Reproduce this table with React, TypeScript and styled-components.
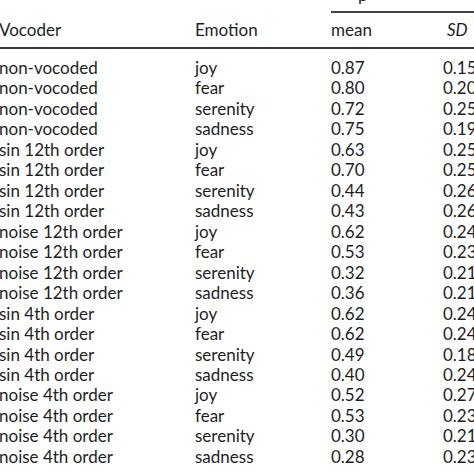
import styled, { createGlobalStyle } from "styled-components";

interface IRow {
  vocoder: string;
  emotion: string;
  mean: string;
  sd: string;
}

const rows: IRow[] = [
  { vocoder: "non-vocoded", emotion: "joy", mean: "0.87", sd: "0.15" },
  { vocoder: "non-vocoded", emotion: "fear", mean: "0.80", sd: "0.20" },
  { vocoder: "non-vocoded", emotion: "serenity", mean: "0.72", sd: "0.25" },
  { vocoder: "non-vocoded", emotion: "sadness", mean: "0.75", sd: "0.19" },
  { vocoder: "sin 12th order", emotion: "joy", mean: "0.63", sd: "0.25" },
  { vocoder: "sin 12th order", emotion: "fear", mean: "0.70", sd: "0.25" },
  { vocoder: "sin 12th order", emotion: "serenity", mean: "0.44", sd: "0.26" },
  { vocoder: "sin 12th order", emotion: "sadness", mean: "0.43", sd: "0.26" },
  { vocoder: "noise 12th order", emotion: "joy", mean: "0.62", sd: "0.24" },
  { vocoder: "noise 12th order", emotion: "fear", mean: "0.53", sd: "0.23" },
  { vocoder: "noise 12th order", emotion: "serenity", mean: "0.32", sd: "0.21" },
  { vocoder: "noise 12th order", emotion: "sadness", mean: "0.36", sd: "0.21" },
  { vocoder: "sin 4th order", emotion: "joy", mean: "0.62", sd: "0.24" },
  { vocoder: "sin 4th order", emotion: "fear", mean: "0.62", sd: "0.24" },
  { vocoder: "sin 4th order", emotion: "serenity", mean: "0.49", sd: "0.18" },
  { vocoder: "sin 4th order", emotion: "sadness", mean: "0.40", sd: "0.24" },
  { vocoder: "noise 4th order", emotion: "joy", mean: "0.52", sd: "0.27" },
  { vocoder: "noise 4th order", emotion: "fear", mean: "0.53", sd: "0.23" },
  { vocoder: "noise 4th order", emotion: "serenity", mean: "0.30", sd: "0.21" },
  { vocoder: "noise 4th order", emotion: "sadness", mean: "0.28", sd: "0.23" },
];

const GlobalStyle = createGlobalStyle`
  html, body {
    margin: 0;
    padding: 0;
    background: #fff;
  }
`;

const Page = styled.div`
  width: 474px;
  height: 474px;
  overflow: hidden;
  background: #fff;
  color: #1e1e1e;
  font-family: Lato, "Open Sans", sans-serif;
  font-size: 17px;
`;

const SpanHeader = styled.div`
  display: flex;
  align-items: flex-end;
  margin-left: 331px;
  height: 11px;
`;

const SpanLabel = styled.div`
  padding-left: 27px;
  margin-bottom: 8px;
  line-height: 17px;
  white-space: nowrap;
`;

const SpanRule = styled.div`
  width: 143px;
  height: 2px;
  margin-left: 331px;
  background: #444;
`;

const HeadRule = styled.div`
  width: 474px;
  height: 2px;
  background: #3a3a3a;
`;

const Row = styled.div`
  display: grid;
  grid-template-columns: 196px 136px 112px 1fr;
  margin-left: -1px;
  height: 20.47px;
  line-height: 20.47px;
  white-space: nowrap;
`;

const HeadRow = styled(Row)`
  box-sizing: content-box;
  padding: 7px 0 6.53px;
`;

const Body = styled.div`
  padding-top: 9px;
`;

const Cell = styled.div<{ $italic?: boolean }>`
  font-style: ${({ $italic }) => ($italic ? "italic" : "normal")};
`;

export default function App() {
  return (
    <Page>
      <GlobalStyle />
      <SpanHeader>
        <SpanLabel>p</SpanLabel>
      </SpanHeader>
      <SpanRule />
      <HeadRow>
        <Cell>Vocoder</Cell>
        <Cell>Emotion</Cell>
        <Cell>mean</Cell>
        <Cell $italic>&nbsp;SD</Cell>
      </HeadRow>
      <HeadRule />
      <Body>
        {rows.map((row, i) => (
          <Row key={i}>
            <Cell>{row.vocoder}</Cell>
            <Cell>{row.emotion}</Cell>
            <Cell>{row.mean}</Cell>
            <Cell>{row.sd}</Cell>
          </Row>
        ))}
      </Body>
    </Page>
  );
}
